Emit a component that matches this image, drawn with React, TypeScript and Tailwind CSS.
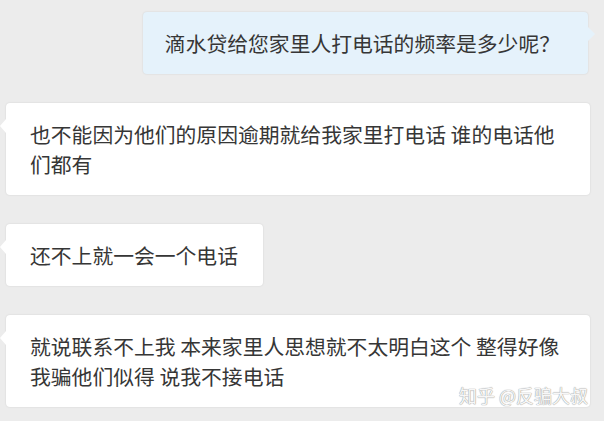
import React from 'react';

const font = { fontFamily: '"Noto Sans CJK SC", "Noto Sans", sans-serif' };

const LeftTail: React.FC = () => (
  <span className="absolute left-[-6px] top-[16px] h-0 w-0 border-y-[7px] border-r-[6px] border-y-transparent border-r-white" />
);

const App: React.FC = () => {
  return (
    <div
      className="h-[421px] w-[604px] overflow-hidden bg-[#ececec] text-[20.8px] leading-[30px] text-[#363636]"
      style={font}
    >
      <div className="flex flex-col items-start gap-[29px] pt-3">
        <div className="flex w-full justify-end pr-4">
          <div className="relative rounded-[4px] bg-[#e5f2fb] py-4 pl-[22px] pr-[28px] shadow-[0_0_2px_rgba(0,0,0,0.12)]">
            滴水贷给您家里人打电话的频率是多少呢？
            <span className="absolute right-[-7px] top-[15px] h-0 w-0 border-y-[7px] border-l-[7px] border-y-transparent border-l-[#e5f2fb]" />
          </div>
        </div>

        <div className="relative ml-[6px] w-[584px] rounded-[4px] bg-white py-4 pl-6 pr-5 shadow-[0_0_2px_rgba(0,0,0,0.12)]">
          <LeftTail />
          也不能因为他们的原因逾期就给我家里打电话 谁的电话他们都有
        </div>

        <div className="relative ml-[6px] rounded-[4px] bg-white py-4 pl-6 pr-[25px] shadow-[0_0_2px_rgba(0,0,0,0.12)]">
          <LeftTail />
          还不上就一会一个电话
        </div>

        <div className="relative ml-[6px] w-[584px] rounded-[4px] bg-white py-4 pl-6 pr-5 shadow-[0_0_2px_rgba(0,0,0,0.12)]">
          <LeftTail />
          就说联系不上我 本来家里人思想就不太明白这个 整得好像我骗他们似得 说我不接电话
          <span className="absolute bottom-[1px] right-[2px] text-[18px] leading-[22px] text-[#f7f7f7] [text-shadow:0_0_1px_#9a9a9a,0_0_1px_#9a9a9a]">
            知乎 @反骗大叔
          </span>
        </div>
      </div>
    </div>
  );
};

export default App;
